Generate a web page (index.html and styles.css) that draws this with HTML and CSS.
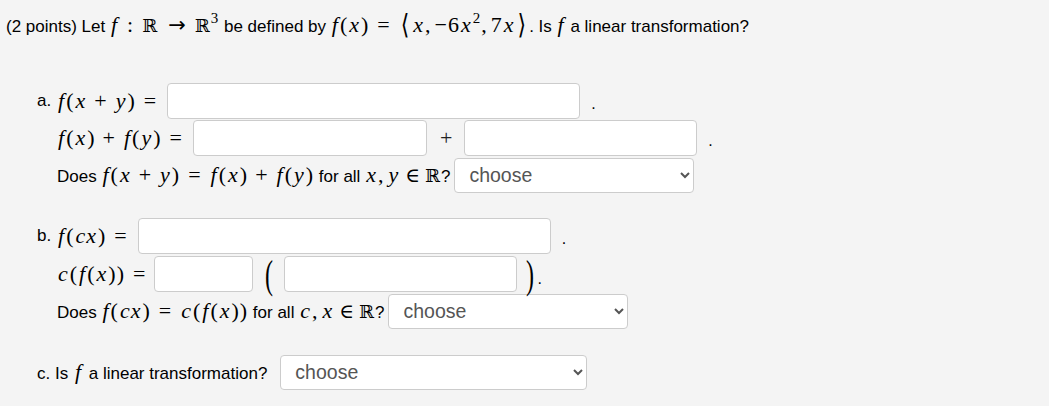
FILE: index.html
```html
<!DOCTYPE html>
<html>
<head>
<meta charset="utf-8">
<link rel="stylesheet" href="styles.css">
</head>
<body>
<div class="problem">
  <p class="title">(2 points) Let <span class="m"><i>f</i><span class="rel">:</span><span class="bb">ℝ</span><span class="rel arrow">→</span><span class="bb">ℝ</span><sup>3</sup></span> be defined by <span class="m"><i>f</i>(<i>x</i>)<span class="rel">=</span><span class="ang">⟨</span><i>x</i>,<span class="sp"></span>−6<i>x</i><sup>2</sup>,<span class="sp"></span>7<i>x</i><span class="ang">⟩</span></span>. Is <span class="m"><i>f</i></span> a linear transformation?</p>

  <div class="part part-a">
    <span class="label">a.</span>
    <div class="rows">
      <div class="row">
        <span class="m"><i>f</i>(<i>x</i><span class="op">+</span><i>y</i>)<span class="rel">=</span></span>
        <input class="field w413" type="text">
        <span class="dot">.</span>
      </div>
      <div class="row">
        <span class="m"><i>f</i>(<i>x</i>)<span class="op">+</span><i>f</i>(<i>y</i>)<span class="rel">=</span></span>
        <input class="field w234" type="text">
        <span class="m plus">+</span>
        <input class="field w233 after-plus" type="text">
        <span class="dot">.</span>
      </div>
      <div class="row">
        <span class="txt">Does <span class="m"><i>f</i>(<i>x</i><span class="op">+</span><i>y</i>)<span class="rel">=</span><i>f</i>(<i>x</i>)<span class="op">+</span><i>f</i>(<i>y</i>)</span> for all <span class="m"><i>x</i>,<span class="sp"></span><i>y</i><span class="rel in">∈</span><span class="bb">ℝ</span></span>?</span>
        <select class="choice w240"><option>choose</option><option>yes</option><option>no</option></select>
      </div>
    </div>
  </div>

  <div class="part part-b">
    <span class="label">b.</span>
    <div class="rows">
      <div class="row">
        <span class="m"><i>f</i>(<i>cx</i>)<span class="rel">=</span></span>
        <input class="field w413" type="text">
        <span class="dot">.</span>
      </div>
      <div class="row tall">
        <span class="m"><i>c</i>(<i>f</i>(<i>x</i>))<span class="rel">=</span></span>
        <input class="field w99 pull" type="text">
        <span class="big open">(</span>
        <input class="field w233 tight" type="text">
        <span class="big close">)</span><span class="dot2">.</span>
      </div>
      <div class="row">
        <span class="txt">Does <span class="m"><i>f</i>(<i>cx</i>)<span class="rel">=</span><i>c</i>(<i>f</i>(<i>x</i>))</span> for all <span class="m"><i>c</i>,<span class="sp"></span><i>x</i><span class="rel in">∈</span><span class="bb">ℝ</span></span>?</span>
        <select class="choice w240"><option>choose</option><option>yes</option><option>no</option></select>
      </div>
    </div>
  </div>

  <div class="part part-c">
    <div class="row">
      <span class="txt">c. Is <span class="m solo"><i>f</i></span> a linear transformation?</span>
      <select class="choice w307 wide-gap"><option>choose</option><option>yes</option><option>no</option></select>
    </div>
  </div>
</div>
</body>
</html>
```

FILE: styles.css
```css
html, body {
  margin: 0;
  background: #f4f4f4;
}
body {
  font-family: "Liberation Sans", Arial, sans-serif;
  font-size: 17px;
  color: #000;
}
.problem {
  padding: 14px 0 0 6px;
}
.title {
  margin: 0;
  line-height: 24px;
  white-space: nowrap;
}
.m {
  font-family: "Liberation Serif", "DejaVu Serif", serif;
  font-size: 22px;
  line-height: 1;
  letter-spacing: 1px;
}
.m i {
  font-style: italic;
  padding: 0 1px;
}
.m sup {
  font-size: 15px;
  line-height: 0;
  vertical-align: 9px;
  font-style: normal;
}
.bb {
  font-family: "DejaVu Serif", serif;
  font-size: 18px;
}
.rel {
  margin: 0 8px;
}
.rel.arrow {
  font-family: "DejaVu Sans", sans-serif;
  font-size: 21px;
  letter-spacing: 0;
  margin: 0 9px 0 10px;
}
.rel.in {
  margin: 0 4px 0 5px;
  font-size: 20px;
}
.op {
  margin: 0 7px;
}
.sp {
  display: inline-block;
  width: 3px;
}
.ang {
  font-family: "DejaVu Serif", serif;
  font-size: 22px;
  display: inline-block;
  transform: scaleY(1.25);
  margin: 0 2px;
}
.solo {
  margin: 0 1px;
}
.part {
  display: flex;
  align-items: flex-start;
  padding-left: 31px;
}
.part-a { margin-top: 44px; }
.part-b { margin-top: 25px; }
.part-c { margin-top: 25px; }
.label {
  width: 20px;
  line-height: 36px;
}
.rows {
  display: flex;
  flex-direction: column;
  gap: 1px;
}
.row {
  display: flex;
  align-items: center;
  height: 36px;
  white-space: nowrap;
}
.row.tall {
  margin-top: 1px;
}
.field, .choice {
  box-sizing: border-box;
  height: 36px;
  border: 1px solid #cccccc;
  border-radius: 4px;
  background: #fff;
  margin: 0 0 0 2px;
  font-size: 19.5px;
  font-family: "Liberation Sans", Arial, sans-serif;
}
.choice {
  height: 35px;
  color: #555;
  padding: 0 8px 0 10px;
  margin-left: 4px;
}
.choice.wide-gap { margin-left: 13px; }
.w413 { width: 413px; }
.w234 { width: 234px; }
.w233 { width: 233px; }
.w99 { width: 99px; }
.w240 { width: 240px; }
.w307 { width: 307px; }
.field.pull { margin-left: 0; }
.plus {
  color: #222;
  margin: 0 0 0 13px;
}
.after-plus { margin-left: 11px; }
.dot {
  margin-left: 11px;
  font-size: 16px;
  padding-top: 6px;
}
.big {
  font-family: "Liberation Serif", serif;
  font-size: 30px;
  display: inline-block;
  transform: scale(0.8, 1.35);
  line-height: 1;
}
.big.open { margin-left: 11px; }
.tight { margin-left: 10px; }
.big.close { margin-left: 8px; }
.dot2 {
  font-size: 16px;
  padding-top: 10px;
  margin-left: 2px;
}
```
